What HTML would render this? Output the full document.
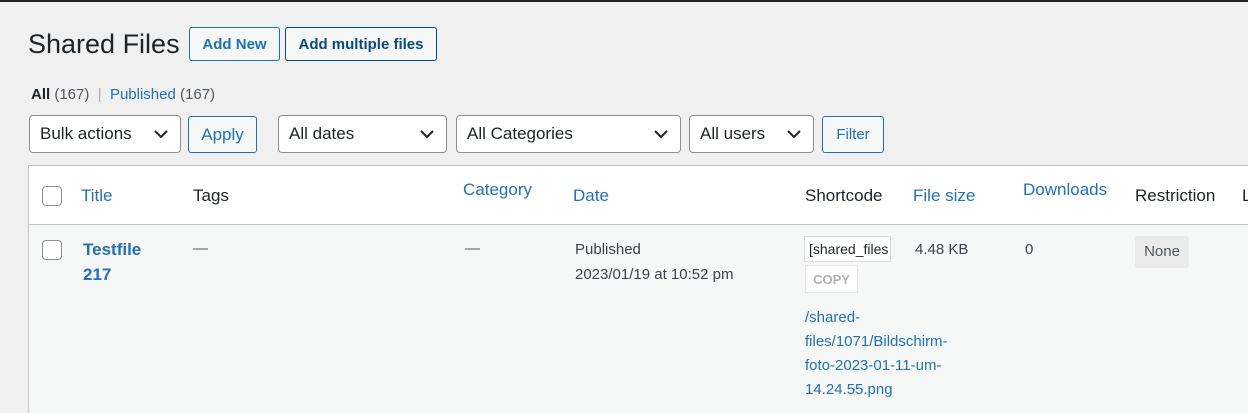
<!DOCTYPE html>
<html style="height:413px;overflow:hidden"><head><meta charset="utf-8"><style>
*{box-sizing:border-box;margin:0;padding:0}
html,body{width:1248px;height:413px;overflow:hidden}
body{background:#f0f0f1;font-family:"Liberation Sans",sans-serif;color:#1d2327;position:relative;font-size:14px}
.a{position:absolute;white-space:nowrap}
.blue{color:#2271b1}
.btn{position:absolute;border:1px solid #2271b1;border-radius:3px;background:#f6f7f7;color:#2271b1;font-size:15px;display:flex;align-items:center;justify-content:center}
.sel{position:absolute;border:1px solid #8c8f94;border-radius:4px;background:#fff;font-size:17px;padding-left:10px;display:flex;align-items:center;height:38px;top:115px}
.sel svg{position:absolute;right:12px;top:14px}
.cb{position:absolute;width:20px;height:20px;border:1px solid #8c8f94;border-radius:4px;background:#fff}
.h{position:absolute;font-size:17px;top:186px}
.c{position:absolute;font-size:15px}
</style></head><body>
<div class="a" style="left:0;top:0;width:1248px;height:2px;background:#1d2327"></div>
<div class="a" style="left:28px;top:29px;font-size:27px;font-weight:400">Shared Files</div>
<div class="btn" style="left:189px;top:27px;width:91px;height:34px;font-weight:bold">Add New</div>
<div class="btn" style="left:285px;top:27px;width:152px;height:34px;font-weight:bold;border-color:#0a4b78;color:#0a4b78">Add multiple files</div>
<div class="a" style="left:31px;top:86px;font-size:15px"><b>All</b> <span style="color:#50575e">(167)</span> <span style="color:#a7aaad">&nbsp;|&nbsp;</span> <span class="blue">Published</span> <span style="color:#50575e">(167)</span></div>
<div class="sel" style="left:29px;width:152px">Bulk actions<svg width="14" height="9" viewBox="0 0 14 9"><path d="M1 1l6 6 6-6" fill="none" stroke="#1d2327" stroke-width="2"/></svg></div>
<div class="btn" style="left:188px;top:116px;width:69px;height:37px;font-size:17px">Apply</div>
<div class="sel" style="left:278px;width:169px">All dates<svg width="14" height="9" viewBox="0 0 14 9"><path d="M1 1l6 6 6-6" fill="none" stroke="#1d2327" stroke-width="2"/></svg></div>
<div class="sel" style="left:456px;width:225px">All Categories<svg width="14" height="9" viewBox="0 0 14 9"><path d="M1 1l6 6 6-6" fill="none" stroke="#1d2327" stroke-width="2"/></svg></div>
<div class="sel" style="left:689px;width:125px">All users<svg width="14" height="9" viewBox="0 0 14 9"><path d="M1 1l6 6 6-6" fill="none" stroke="#1d2327" stroke-width="2"/></svg></div>
<div class="btn" style="left:822px;top:116px;width:62px;height:37px;font-size:15px">Filter</div>
<div class="a" style="left:28px;top:165px;width:1220px;height:248px;border:1px solid #c3c4c7;border-right:none;border-bottom:none;background:#f6f7f7"></div>
<div class="a" style="left:29px;top:166px;width:1219px;height:59px;background:#fff;border-bottom:1px solid #c3c4c7"></div>
<div class="cb" style="left:42px;top:186px"></div>
<div class="h blue" style="left:81px">Title</div>
<div class="h" style="left:193px">Tags</div>
<div class="h blue" style="left:463px;top:180px">Category</div>
<div class="h blue" style="left:573px">Date</div>
<div class="h" style="left:805px">Shortcode</div>
<div class="h blue" style="left:913px">File size</div>
<div class="h blue" style="left:1023px;top:180px">Downloads</div>
<div class="h" style="left:1135px">Restriction</div>
<div class="a" style="left:1240px;top:166px;width:8px;height:59px;overflow:hidden"><div class="h" style="left:2px;top:20px">L</div></div>
<div class="cb" style="left:42px;top:240px"></div>
<div class="c blue" style="left:83px;top:237px;font-weight:bold;font-size:17px;line-height:25px">Testfile<br>217</div>
<div class="c" style="left:193px;top:240px;font-weight:300;color:#50575e">—</div>
<div class="c" style="left:465px;top:240px;font-weight:300;color:#50575e">—</div>
<div class="c" style="left:575px;top:237px;line-height:25px;color:#3c434a">Published<br>2023/01/19 at 10:52 pm</div>
<div class="a" style="left:804px;top:236px;width:87px;height:26px;background:#fff;border:1px solid #dcdcde;font-size:14px;padding:4px 0 0 4px;overflow:hidden">[shared_files</div>
<div class="a" style="left:805px;top:265px;width:53px;height:28px;background:#fff;border:1px solid #e5e5e5;color:#b0b0b0;font-size:13px;font-weight:bold;text-align:center;line-height:28px">COPY</div>
<div class="c" style="left:915px;top:241px;color:#3c434a">4.48 KB</div>
<div class="c" style="left:1025px;top:241px;color:#3c434a">0</div>
<div class="a" style="left:1135px;top:236px;width:54px;height:32px;background:#ebebeb;border-radius:3px;color:#50575e;font-size:15px;text-align:center;line-height:32px">None</div>
<div class="c blue" style="left:805px;top:306px;line-height:24px">/shared-<br>files/1071/Bildschirm-<br>foto-2023-01-11-um-<br>14.24.55.png</div>
</body></html>
